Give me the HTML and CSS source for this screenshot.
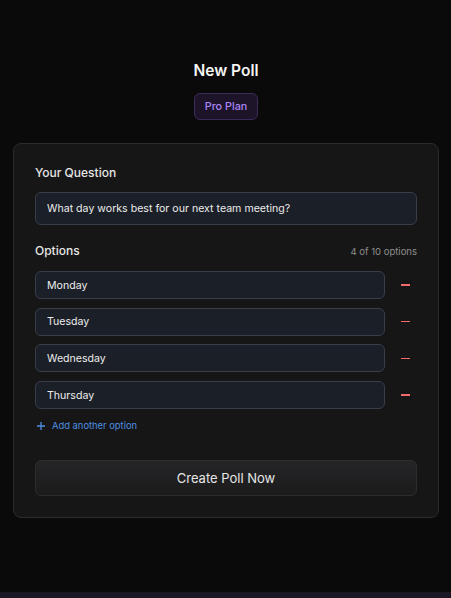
FILE: index.html
```html
<!DOCTYPE html>
<html lang="en">
<head>
<meta charset="utf-8">
<title>New Poll</title>
<link rel="stylesheet" href="styles.css">
</head>
<body>
<main class="page">
  <header class="head">
    <h1 class="title">New Poll</h1>
    <span class="badge">Pro Plan</span>
  </header>
  <section class="card">
    <label class="label">Your Question</label>
    <div class="input question">What day works best for our next team meeting?</div>
    <div class="opts-head">
      <span class="label">Options</span>
      <span class="count">4 of 10 options</span>
    </div>
    <div class="options">
      <div class="row"><div class="input opt">Monday</div><button class="remove"><span class="minus"></span></button></div>
      <div class="row"><div class="input opt">Tuesday</div><button class="remove"><span class="minus"></span></button></div>
      <div class="row"><div class="input opt">Wednesday</div><button class="remove"><span class="minus"></span></button></div>
      <div class="row"><div class="input opt">Thursday</div><button class="remove"><span class="minus"></span></button></div>
    </div>
    <a class="add"><svg width="10" height="10" viewBox="0 0 10 10"><path d="M5 1v8M1 5h8" stroke="#4f8fe0" stroke-width="1.3" fill="none"/></svg><span>Add another option</span></a>
    <button class="submit">Create Poll Now</button>
  </section>
</main>
<footer class="foot"></footer>
</body>
</html>
```
FILE: styles.css
```css
* { box-sizing: border-box; }
html, body { margin: 0; padding: 0; }
body {
  background: #0a0a0a;
  font-family: Inter, "Noto Sans", sans-serif;
  color: #e5e5e5;
  height: 598px;
  overflow: hidden;
  display: flex;
  flex-direction: column;
}
.page {
  flex: 1;
  padding: 61px 12px 0 13px;
}
.head {
  display: flex;
  flex-direction: column;
  align-items: center;
  gap: 12px;
  margin-bottom: 23px;
}
.title {
  margin: 0;
  font-size: 15.5px;
  line-height: 20px;
  font-weight: 600;
  color: #f5f5f5;
}
.badge {
  display: inline-flex;
  align-items: center;
  height: 27px;
  padding: 0 10px;
  border-radius: 6px;
  background: #1d1429;
  border: 1px solid #3d2a5c;
  color: #a985f7;
  font-size: 10.8px;
  font-weight: 500;
}
.card {
  background: #161616;
  border: 1px solid #2b2b2b;
  border-radius: 8px;
  padding: 21px;
  display: flex;
  flex-direction: column;
}
.label {
  font-size: 12px;
  line-height: 16px;
  font-weight: 500;
  color: #e6e6e6;
}
.input {
  background: #1b1f27;
  border: 1px solid #373d49;
  border-radius: 6px;
  color: #ececec;
  font-size: 10.6px;
  display: flex;
  align-items: center;
  padding: 0 11px;
}
.question {
  margin-top: 11px;
  height: 33px;
}
.opts-head {
  margin-top: 18px;
  display: flex;
  justify-content: space-between;
  align-items: center;
}
.count {
  font-size: 9.5px;
  color: #8f8f8f;
}
.options {
  margin-top: 12px;
  display: flex;
  flex-direction: column;
  gap: 8.7px;
}
.row {
  display: flex;
  align-items: center;
  gap: 8px;
}
.opt {
  flex: 1;
  height: 28px;
}
.remove {
  width: 24px;
  height: 28px;
  padding: 0;
  border: 0;
  background: transparent;
  display: flex;
  align-items: center;
  justify-content: center;
}
.minus {
  display: block;
  width: 9px;
  height: 1.5px;
  background: #f26b6b;
}
.add {
  margin-top: 10px;
  display: flex;
  align-items: center;
  gap: 6px;
  font-size: 9.4px;
  line-height: 14px;
  color: #4f8fe0;
  padding-left: 1px;
}
.submit {
  margin-top: 27px;
  height: 36px;
  border-radius: 6px;
  border: 1px solid #2c2c2c;
  background: linear-gradient(180deg, #252527 0%, #1b1b1c 100%);
  color: #e6e6e6;
  font-family: Inter, "Noto Sans", sans-serif;
  font-size: 13px;
}
.foot {
  height: 6px;
  background: #1b1624;
}
```
